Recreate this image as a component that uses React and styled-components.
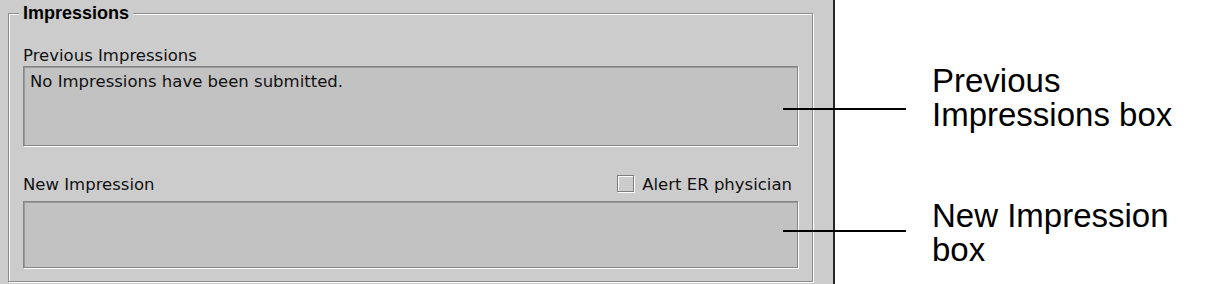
import React from 'react'
import styled, { createGlobalStyle } from 'styled-components'

const GlobalStyle = createGlobalStyle`
  html, body {
    margin: 0;
    padding: 0;
    background: #ffffff;
  }
  body {
    width: 1214px;
    height: 284px;
    overflow: hidden;
  }
`

const Page = styled.div`
  display: flex;
  height: 284px;
`

const Panel = styled.div`
  box-sizing: border-box;
  width: 835px;
  flex: none;
  height: 284px;
  padding: 13px 0 0 8px;
  background: #cccccc;
  border-right: 2px solid #262626;
`

const Group = styled.div`
  position: relative;
  box-sizing: border-box;
  width: 805px;
  height: 269px;
  padding: 32px 14px 0 14px;
  border: 1px solid #8c8c8c;
  box-shadow: inset 1px 1px 0 #ffffff, 1px 1px 0 #ffffff;
`

const GroupTitle = styled.span`
  position: absolute;
  top: -11px;
  left: 10px;
  padding: 0 4px;
  background: #cccccc;
  font: bold 18px/20px 'Liberation Sans', Arial, sans-serif;
  color: #000;
`

const Row = styled.div`
  display: flex;
  align-items: center;
  justify-content: space-between;
  height: 20px;
  margin-top: ${({ $top }) => $top || 0}px;
  margin-bottom: ${({ $gap }) => $gap || 0}px;
`

const Label = styled.span`
  font: 16.5px/20px 'DejaVu Sans', Verdana, sans-serif;
  color: #111;
  white-space: nowrap;
`

const CheckLabel = styled.label`
  display: flex;
  align-items: center;
  gap: 8px;
  margin-right: 6px;
  font: 16.5px/20px 'DejaVu Sans', Verdana, sans-serif;
  color: #111;
  cursor: default;
`

const CheckBox = styled.span`
  box-sizing: border-box;
  width: 17px;
  height: 17px;
  margin-top: -3px;
  border: 1px solid #7e7e7e;
  box-shadow: inset 1px 1px 0 #ffffff, 1px 1px 0 #ffffff;
  background: #cccccc;
`

const TextBox = styled.div`
  box-sizing: border-box;
  height: ${({ $h }) => $h}px;
  padding: 5px 6px;
  background: #c2c2c2;
  border: 1px solid #858585;
  box-shadow: inset 1px 1px 0 #9a9a9a, 1px 1px 0 #ffffff;
  font: 16.5px/20px 'DejaVu Sans', Verdana, sans-serif;
  color: #111;
`

const Annotations = styled.div`
  display: flex;
  flex-direction: column;
  padding-top: 64px;
`

const Callout = styled.div`
  display: flex;
  align-items: flex-start;
  margin-bottom: ${({ $gap }) => $gap || 0}px;
`

const Leader = styled.div`
  position: relative;
  flex: none;
  width: 123px;
  height: 2px;
  margin: ${({ $offset }) => $offset}px 0 0 -52px;
  background: #000;
`

const CalloutText = styled.div`
  margin-left: 26px;
  font: 33px/34px 'Liberation Sans', Arial, sans-serif;
  color: #000;
`

export default function App() {
  return (
    <>
      <GlobalStyle />
      <Page>
        <Panel>
          <Group>
            <GroupTitle>Impressions</GroupTitle>
            <Row>
              <Label>Previous Impressions</Label>
            </Row>
            <TextBox $h={80}>No Impressions have been submitted.</TextBox>
            <Row $top={29} $gap={6}>
              <Label>New Impression</Label>
              <CheckLabel>
                <CheckBox />
                Alert ER physician
              </CheckLabel>
            </Row>
            <TextBox $h={67} />
          </Group>
        </Panel>
        <Annotations>
          <Callout $gap={67}>
            <Leader $offset={44} />
            <CalloutText>
              Previous
              <br />
              Impressions box
            </CalloutText>
          </Callout>
          <Callout>
            <Leader $offset={31} />
            <CalloutText>
              New Impression
              <br />
              box
            </CalloutText>
          </Callout>
        </Annotations>
      </Page>
    </>
  )
}
